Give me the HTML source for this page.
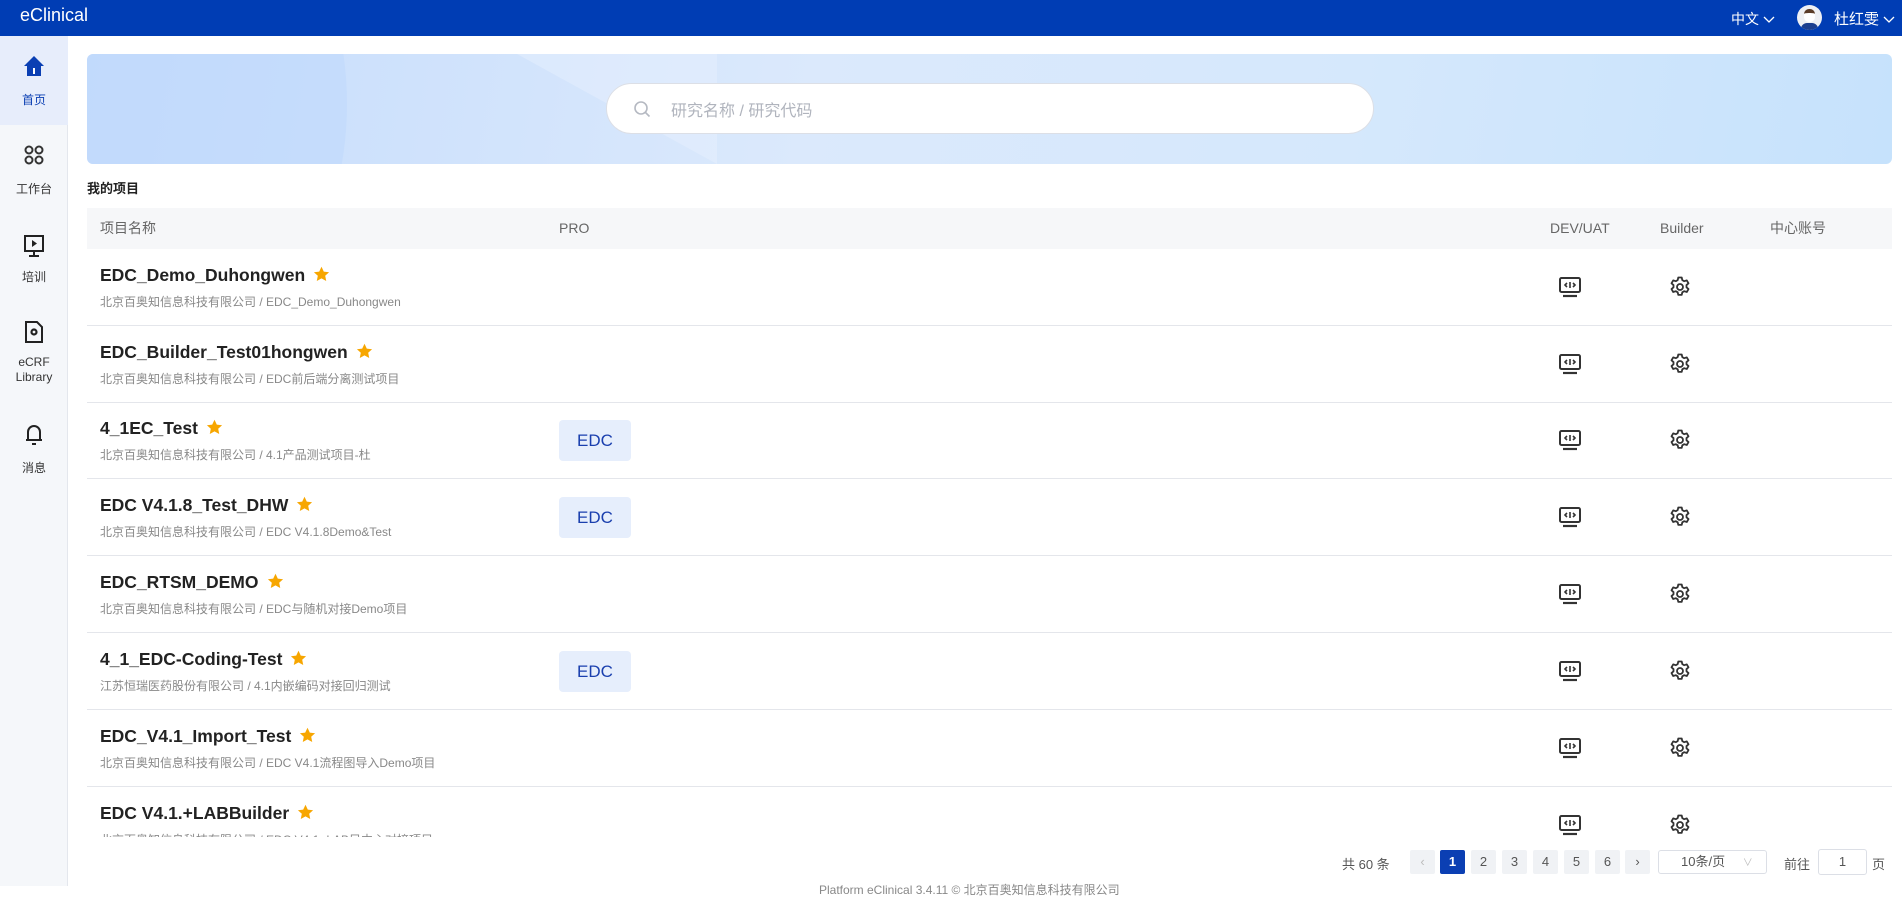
<!DOCTYPE html>
<html><head><meta charset="utf-8"><style>
*{margin:0;padding:0;box-sizing:border-box}
body{width:1902px;height:886px;overflow:hidden;background:#fff;font-family:"Liberation Sans","Noto Sans CJK SC",sans-serif;position:relative;color:#333}
.top{position:absolute;left:0;top:0;width:1902px;height:36px;background:#003db4;color:#fff}
.side{position:absolute;left:0;top:36px;width:68px;height:850px;background:#f5f7fa;border-right:1px solid #e4e7ed}
.si{position:absolute;left:0;width:68px;text-align:center;font-size:12px;color:#333}
.abs{position:absolute}
.banner{position:absolute;left:87px;top:54px;width:1805px;height:110px;border-radius:6px;background:linear-gradient(100deg,#c5dcfc 0%,#dbe9fc 40%,#d5e8fc 70%,#c6e2fc 100%);overflow:hidden}
.search{position:absolute;left:606px;top:83px;width:768px;height:51px;border-radius:26px;background:#fff;border:1px solid #dcdfe6}
.th{position:absolute;left:87px;top:208px;width:1805px;height:41px;background:#f6f7f9;font-size:14px;color:#666}
.th span{line-height:41px;top:0!important}
.row{position:absolute;left:87px;width:1805px;height:77px;border-bottom:1px solid #e4e6eb}
.t{position:absolute;left:13px;top:16px;font-size:17.5px;font-weight:bold;color:#222;white-space:nowrap}
.t svg{vertical-align:-1px;margin-left:8px}
.s{position:absolute;left:13px;top:44px;font-size:12px;color:#888;white-space:nowrap}
.tag{position:absolute;left:472px;top:18px;width:72px;height:41px;background:#e6eefc;border-radius:4px;color:#1a3fae;font-size:17px;text-align:center;line-height:41px}
.mon{position:absolute;left:1471px;top:26px}
.gear{position:absolute;left:1581px;top:26px}
.pb{position:absolute;top:850px;height:24px;width:25px;background:#f0f2f5;border-radius:2px;font-size:13px;text-align:center;line-height:24px;color:#555}
</style></head><body>
<div class="top">
<div class="abs" style="left:20px;top:5px;font-size:18px">eClinical</div>
<div class="abs" style="left:1731px;top:9px;font-size:14px">中文 <svg width="12" height="8" viewBox="0 0 12 8"><path d="M1 1l5 5 5-5" stroke="#fff" fill="none" stroke-width="1.3"/></svg></div>
<div class="abs" style="left:1797px;top:5px;width:25px;height:25px;border-radius:50%;background:#eef0f4;overflow:hidden"><div class="abs" style="left:7px;top:4px;width:11px;height:13px;border-radius:5px;background:#fff;border-top:4px solid #5a3c28"></div><div class="abs" style="left:4px;top:18px;width:17px;height:10px;border-radius:6px 6px 0 0;background:#1b3f8f"></div></div>
<div class="abs" style="left:1834px;top:8px;font-size:15px">杜红雯 <svg width="12" height="8" viewBox="0 0 12 8"><path d="M1 1l5 5 5-5" stroke="#fff" fill="none" stroke-width="1.3"/></svg></div>
</div>
<div class="side">
<div class="abs" style="left:0;top:0;width:68px;height:89px;background:#e7edfb"></div>
<div class="si" style="top:18px"><svg width="24" height="24" viewBox="0 0 24 24"><path d="M12 2L2 12h3v10h14V12h3z" fill="#0b3fb3"/><rect x="11" y="14" width="2" height="6" fill="#fff"/></svg></div>
<div class="si" style="top:55px;color:#0b3fb3">首页</div>
<div class="si" style="top:108px"><svg width="22" height="22" viewBox="0 0 22 22" fill="none" stroke="#333" stroke-width="2"><circle cx="6" cy="6" r="3.5"/><circle cx="16" cy="6" r="3.5"/><rect x="2.5" y="12.5" width="7" height="7" rx="3.5"/><rect x="12.5" y="12.5" width="7" height="7" rx="3.5"/></svg></div>
<div class="si" style="top:144px">工作台</div>
<div class="si" style="top:198px"><svg width="22" height="24" viewBox="0 0 22 24" fill="none" stroke="#222" stroke-width="2"><rect x="2" y="2" width="18" height="15"/><path d="M9 6l5 3.5-5 3.5z" fill="#222" stroke="none"/><path d="M11 17v4M6 22h10"/></svg></div>
<div class="si" style="top:232px">培训</div>
<div class="si" style="top:284px"><svg width="20" height="24" viewBox="0 0 20 24" fill="none" stroke="#222" stroke-width="2"><path d="M2 2h11l5 5v15H2z"/><circle cx="10" cy="12" r="2.5" stroke-width="2.2"/></svg></div>
<div class="si" style="top:319px;line-height:15px">eCRF<br>Library</div>
<div class="si" style="top:386px"><svg width="20" height="24" viewBox="0 0 20 24" fill="none" stroke="#222" stroke-width="2"><path d="M4 18V10a6 6 0 0112 0v8M2 18h16M8 22h4"/></svg></div>
<div class="si" style="top:423px">消息</div>
</div>
<div class="banner">
<div class="abs" style="left:-100px;top:-200px;width:360px;height:500px;border-radius:50%;background:rgba(190,215,252,.5)"></div>
<div class="abs" style="left:370px;top:0;width:0;height:0;border-left:60px solid transparent;border-right:200px solid rgba(235,243,255,.4);border-bottom:110px solid transparent"></div>
</div>
<div class="search"><svg class="abs" style="left:26px;top:16px" width="18" height="18" viewBox="0 0 18 18" fill="none" stroke="#b5b9c2" stroke-width="1.6"><circle cx="8" cy="8" r="6"/><path d="M12.5 12.5l4 4"/></svg><div class="abs" style="left:64px;top:13px;font-size:16px;color:#b0b4bd">研究名称 / 研究代码</div></div>
<div class="abs" style="left:87px;top:178px;font-size:13px;font-weight:bold;color:#222">我的项目</div>
<div class="th"><span class="abs" style="left:13px">项目名称</span><span class="abs" style="left:472px">PRO</span><span class="abs" style="left:1463px">DEV/UAT</span><span class="abs" style="left:1573px">Builder</span><span class="abs" style="left:1683px">中心账号</span></div>
<div class="row" style="top:249px"><div class="t">EDC_Demo_Duhongwen<svg width="17" height="16" viewBox="0 0 24 23"><path d="M12 1l3.3 7 7.6.9-5.6 5.2 1.5 7.5L12 17.8l-6.8 3.8 1.5-7.5L1.1 8.9l7.6-.9z" fill="#f7a600"/></svg></div><div class="s">北京百奥知信息科技有限公司 / EDC_Demo_Duhongwen</div><div class="mon"></div><div class="gear"></div></div>
<div class="row" style="top:326px"><div class="t">EDC_Builder_Test01hongwen<svg width="17" height="16" viewBox="0 0 24 23"><path d="M12 1l3.3 7 7.6.9-5.6 5.2 1.5 7.5L12 17.8l-6.8 3.8 1.5-7.5L1.1 8.9l7.6-.9z" fill="#f7a600"/></svg></div><div class="s">北京百奥知信息科技有限公司 / EDC前后端分离测试项目</div><div class="mon"></div><div class="gear"></div></div>
<div class="row" style="top:402px"><div class="t">4_1EC_Test<svg width="17" height="16" viewBox="0 0 24 23"><path d="M12 1l3.3 7 7.6.9-5.6 5.2 1.5 7.5L12 17.8l-6.8 3.8 1.5-7.5L1.1 8.9l7.6-.9z" fill="#f7a600"/></svg></div><div class="s">北京百奥知信息科技有限公司 / 4.1产品测试项目-杜</div><div class="tag">EDC</div><div class="mon"></div><div class="gear"></div></div>
<div class="row" style="top:479px"><div class="t">EDC V4.1.8_Test_DHW<svg width="17" height="16" viewBox="0 0 24 23"><path d="M12 1l3.3 7 7.6.9-5.6 5.2 1.5 7.5L12 17.8l-6.8 3.8 1.5-7.5L1.1 8.9l7.6-.9z" fill="#f7a600"/></svg></div><div class="s">北京百奥知信息科技有限公司 / EDC V4.1.8Demo&amp;Test</div><div class="tag">EDC</div><div class="mon"></div><div class="gear"></div></div>
<div class="row" style="top:556px"><div class="t">EDC_RTSM_DEMO<svg width="17" height="16" viewBox="0 0 24 23"><path d="M12 1l3.3 7 7.6.9-5.6 5.2 1.5 7.5L12 17.8l-6.8 3.8 1.5-7.5L1.1 8.9l7.6-.9z" fill="#f7a600"/></svg></div><div class="s">北京百奥知信息科技有限公司 / EDC与随机对接Demo项目</div><div class="mon"></div><div class="gear"></div></div>
<div class="row" style="top:633px"><div class="t">4_1_EDC-Coding-Test<svg width="17" height="16" viewBox="0 0 24 23"><path d="M12 1l3.3 7 7.6.9-5.6 5.2 1.5 7.5L12 17.8l-6.8 3.8 1.5-7.5L1.1 8.9l7.6-.9z" fill="#f7a600"/></svg></div><div class="s">江苏恒瑞医药股份有限公司 / 4.1内嵌编码对接回归测试</div><div class="tag">EDC</div><div class="mon"></div><div class="gear"></div></div>
<div class="row" style="top:710px"><div class="t">EDC_V4.1_Import_Test<svg width="17" height="16" viewBox="0 0 24 23"><path d="M12 1l3.3 7 7.6.9-5.6 5.2 1.5 7.5L12 17.8l-6.8 3.8 1.5-7.5L1.1 8.9l7.6-.9z" fill="#f7a600"/></svg></div><div class="s">北京百奥知信息科技有限公司 / EDC V4.1流程图导入Demo项目</div><div class="mon"></div><div class="gear"></div></div>
<div class="row" style="top:787px;border:none;height:50px;overflow:hidden"><div class="t">EDC V4.1.+LABBuilder<svg width="17" height="16" viewBox="0 0 24 23"><path d="M12 1l3.3 7 7.6.9-5.6 5.2 1.5 7.5L12 17.8l-6.8 3.8 1.5-7.5L1.1 8.9l7.6-.9z" fill="#f7a600"/></svg></div><div class="s">北京百奥知信息科技有限公司 / EDC V4.1+LAB目中心对接项目</div><div class="mon"></div><div class="gear"></div></div>
<div class="abs" style="left:87px;top:837px;width:1805px;height:49px;background:#fff"></div>
<div class="abs" style="left:1342px;top:854px;font-size:13px;color:#555">共 60 条</div>
<div class="pb" style="left:1410px;color:#bbb">‹</div>
<div class="pb" style="left:1440px;background:#0b3fb3;color:#fff;font-weight:bold">1</div>
<div class="pb" style="left:1471px">2</div>
<div class="pb" style="left:1502px">3</div>
<div class="pb" style="left:1533px">4</div>
<div class="pb" style="left:1564px">5</div>
<div class="pb" style="left:1595px">6</div>
<div class="pb" style="left:1625px">›</div>
<div class="abs" style="left:1658px;top:850px;width:109px;height:24px;border:1px solid #dcdfe6;border-radius:3px;font-size:13px;color:#555;line-height:22px;padding-left:22px">10条/页 <span style="color:#bbb;margin-left:14px;font-size:10px">∨</span></div>
<div class="abs" style="left:1784px;top:854px;font-size:13px;color:#555">前往</div>
<div class="abs" style="left:1818px;top:849px;width:49px;height:26px;border:1px solid #dcdfe6;border-radius:3px;font-size:13px;color:#555;text-align:center;line-height:24px">1</div>
<div class="abs" style="left:1872px;top:854px;font-size:13px;color:#555">页</div>
<div class="abs" style="left:819px;top:881px;font-size:12px;color:#888;white-space:nowrap">Platform eClinical 3.4.11 © 北京百奥知信息科技有限公司</div>
<script>
var m='<svg width="24" height="24" viewBox="0 0 24 24" fill="none" stroke="#333" stroke-width="2"><rect x="2" y="3" width="20" height="14" rx="1.5"/><path d="M5 21h14" stroke-width="2.2"/><path d="M9 8l-2 2 2 2M15 8l2 2-2 2M12 7v6" stroke-width="1.6"/></svg>';
var g='<svg width="24" height="24" viewBox="0 0 24 24" fill="none" stroke="#333" stroke-width="1.8"><circle cx="12" cy="12" r="3"/><path d="M10.3 2.5h3.4l.6 2.6 1.9 1.1 2.6-.8 1.7 2.9-2 1.8v2.2l2 1.8-1.7 2.9-2.6-.8-1.9 1.1-.6 2.6h-3.4l-.6-2.6-1.9-1.1-2.6.8-1.7-2.9 2-1.8v-2.2l-2-1.8 1.7-2.9 2.6.8 1.9-1.1z" stroke-linejoin="round"/></svg>';
document.querySelectorAll('.mon').forEach(function(e){e.innerHTML=m});
document.querySelectorAll('.gear').forEach(function(e){e.innerHTML=g});
</script>
</body></html>
